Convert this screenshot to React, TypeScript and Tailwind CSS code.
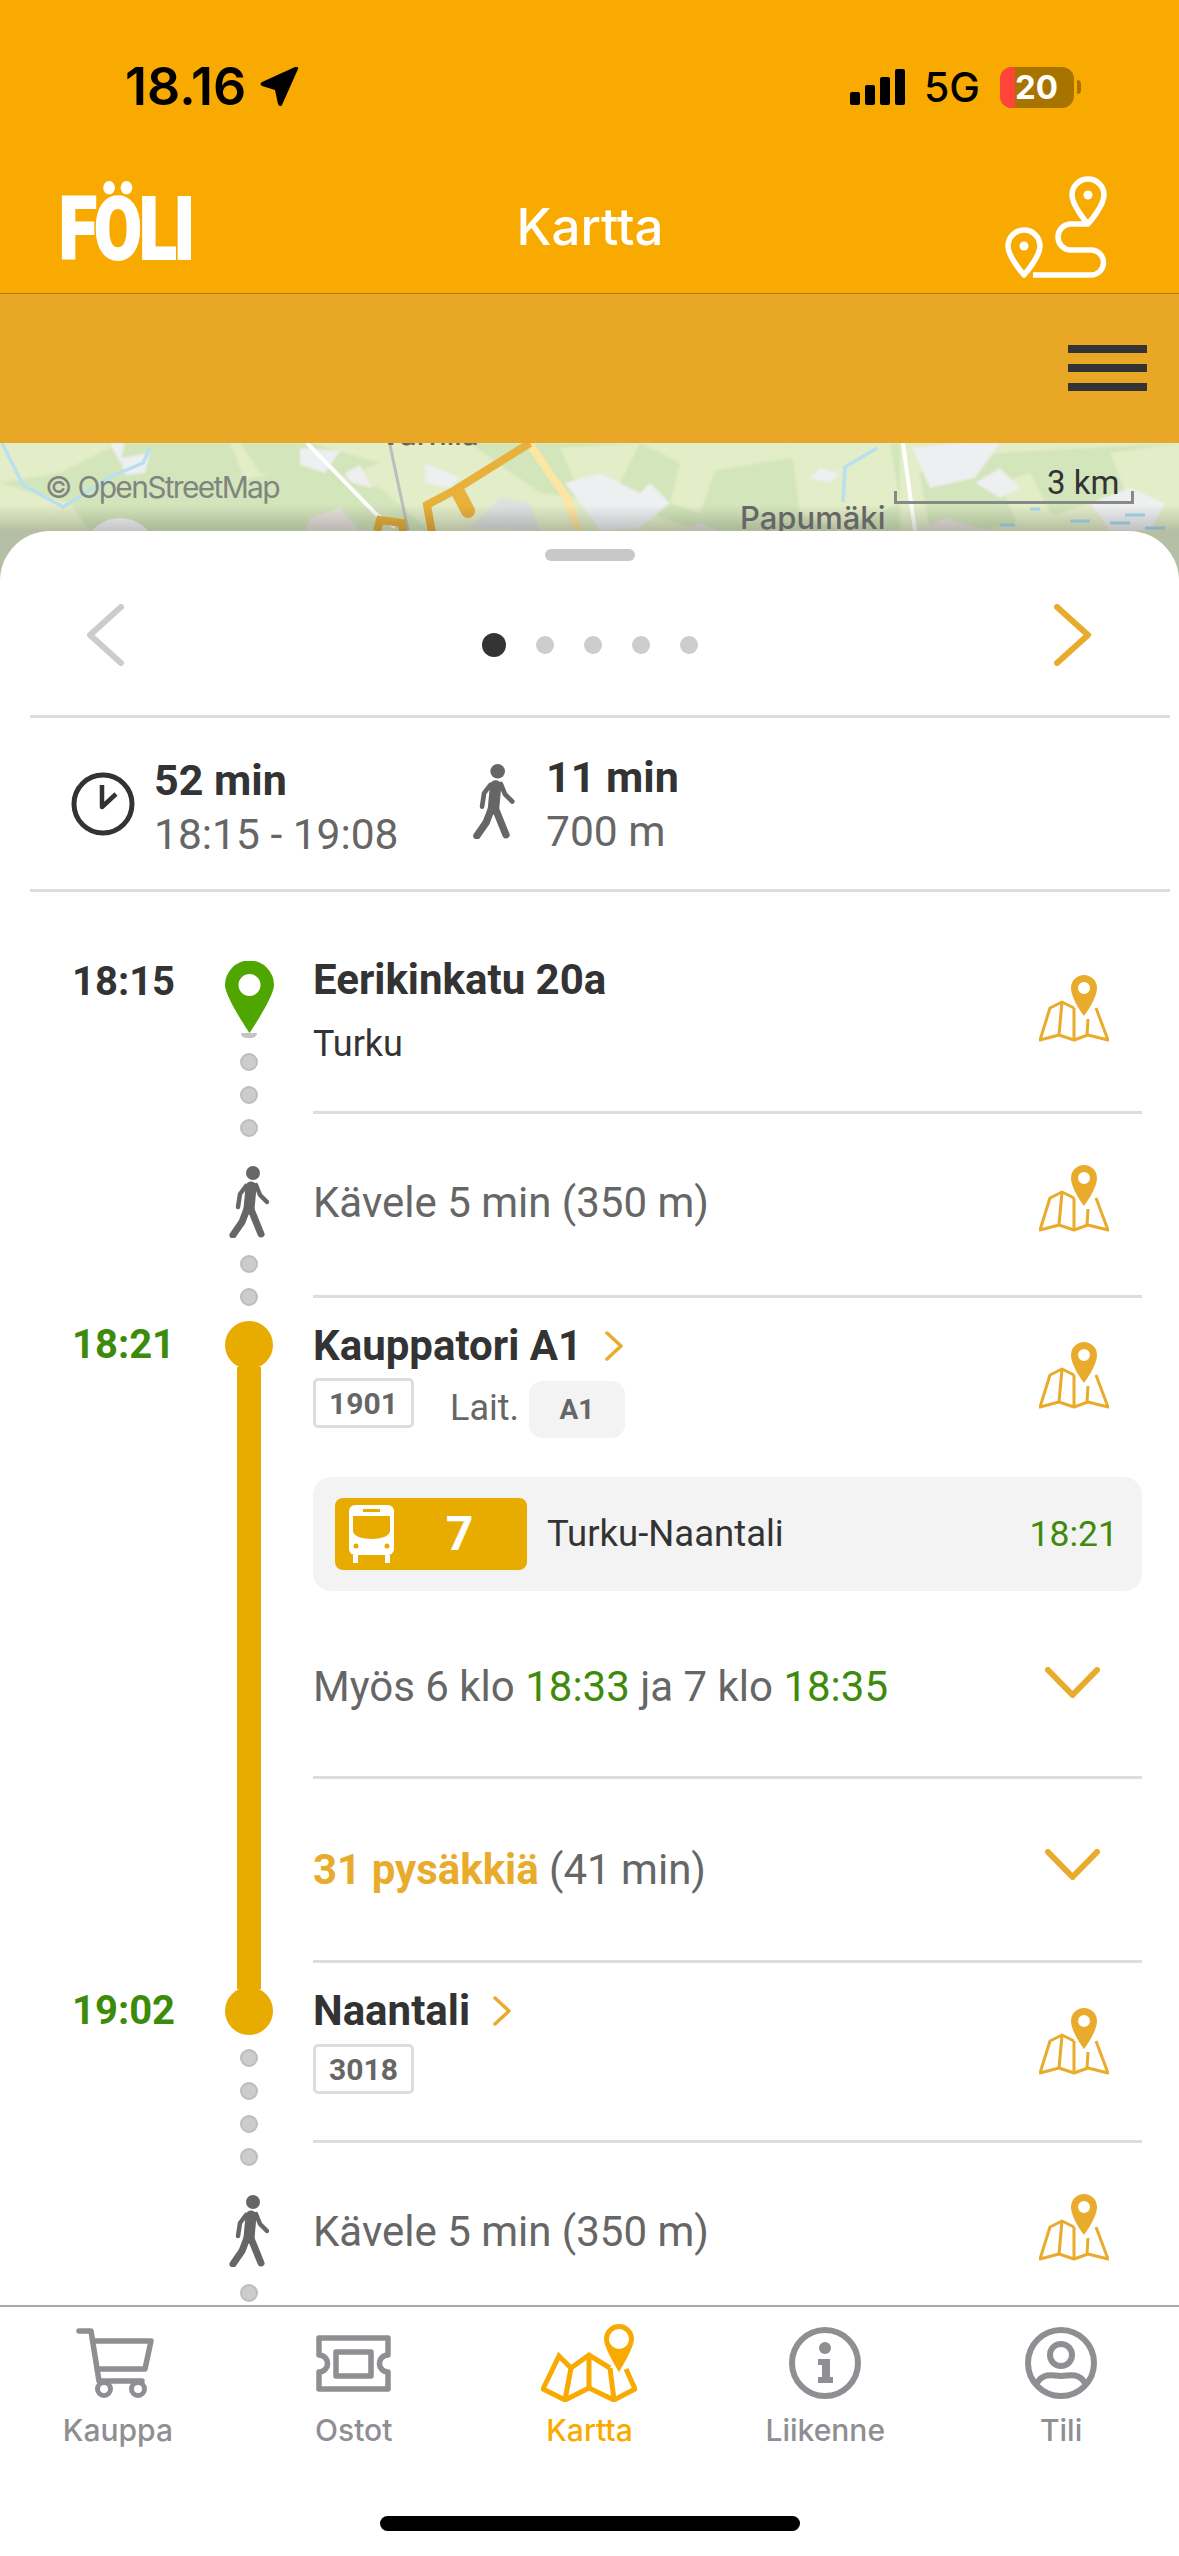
import React from 'react';

const AMBER = '#e9ab2b';

function MapPinIcon() {
  return (
    <svg width="70" height="67" viewBox="0 0 70 67" fill="none" className="shrink-0">
      <path d="M35 33L23 27L11 33L1 65L20 60L35 65L49 60L69 65L57 33" stroke={AMBER} strokeWidth="3" strokeLinejoin="round" />
      <path d="M23 27L20 60M35 33V65M49 44L48 60" stroke={AMBER} strokeWidth="3" />
      <path fillRule="evenodd" clipRule="evenodd" d="M45 41C45 41 32 24 32 13a13 13 0 0 1 26 0C58 24 45 41 45 41ZM45 7a6 6 0 1 0 0 12a6 6 0 0 0 0-12Z" fill={AMBER} />
    </svg>
  );
}

function Walker({ className }: { className?: string }) {
  return (
    <svg width="40" height="73" viewBox="0 0 40 73" fill="none" className={className}>
      <circle cx="24" cy="8" r="7" fill="#666" />
      <path d="M22 22L20 44" stroke="#666" strokeWidth="11" strokeLinecap="round" />
      <path d="M21 42L32 69" stroke="#666" strokeWidth="7" strokeLinecap="round" />
      <path d="M18 44L13 57L4 70" stroke="#666" strokeWidth="7" strokeLinecap="round" strokeLinejoin="round" />
      <path d="M17 21L11 29L9 42" stroke="#666" strokeWidth="4.5" strokeLinecap="round" strokeLinejoin="round" />
      <path d="M27 20L31 30L38 37" stroke="#666" strokeWidth="4.5" strokeLinecap="round" strokeLinejoin="round" />
    </svg>
  );
}

function Dot() {
  return <div className="w-[18px] h-[18px] rounded-full bg-[#cccccc] border-2 border-[#bdbdbd] shrink-0" />;
}

function ChevronDown() {
  return (
    <svg width="55" height="32" viewBox="0 0 55 32" fill="none" className="shrink-0">
      <path d="M3 3L27.5 28L52 3" stroke={AMBER} strokeWidth="6" strokeLinecap="round" strokeLinejoin="round" />
    </svg>
  );
}

function ChevronSmall() {
  return (
    <svg width="20" height="30" viewBox="0 0 20 30" fill="none" className="shrink-0">
      <path d="M3 2L17 15L3 28" stroke={AMBER} strokeWidth="3.5" strokeLinecap="round" strokeLinejoin="round" />
    </svg>
  );
}

function StatusBar() {
  return (
    <div className="h-[174px] flex items-center justify-between pl-[125px] pr-[98px] font-['Inter',sans-serif] text-black">
      <div className="flex items-center gap-[14px]">
        <span className="text-[52px] leading-none font-semibold">18.16</span>
        <svg width="40" height="40" viewBox="0 0 40 40">
          <path d="M38 2L22 38C21 40 19 39 18 37L15 23L2 19C0 18 0 16 2 15L35 0C37 0 39 0 38 2Z" fill="#000" />
        </svg>
      </div>
      <div className="flex items-center">
        <div className="flex items-end gap-[5px] h-[36px]">
          <div className="w-[10px] h-[13px] rounded-[2px] bg-black" />
          <div className="w-[10px] h-[20px] rounded-[2px] bg-black" />
          <div className="w-[10px] h-[28px] rounded-[2px] bg-black" />
          <div className="w-[10px] h-[36px] rounded-[2px] bg-black" />
        </div>
        <span className="ml-[19px] text-[41px] leading-none font-medium">5G</span>
        <div className="ml-[20px] w-[74px] h-[41px] rounded-[12px] bg-[#a87400] overflow-hidden flex relative">
          <div className="w-[15px] bg-[#ff453a]" />
          <span className="text-white text-[33px] leading-[41px] font-bold">20</span>
        </div>
        <div className="ml-[3px] w-[4px] h-[14px] rounded-r-full bg-[#a87400]" />
      </div>
    </div>
  );
}

function RouteIcon() {
  return (
    <svg width="102" height="102" viewBox="0 0 102 102" fill="none">
      <path d="M83 48C83 48 67 30 67 19a16 16 0 0 1 32 0C99 30 83 48 83 48Z" stroke="#fff" strokeWidth="5.5" strokeLinejoin="round" />
      <circle cx="83" cy="19" r="4.5" fill="#fff" />
      <path d="M19 99C19 99 3 81 3 70a16 16 0 0 1 32 0C35 81 19 99 19 99Z" stroke="#fff" strokeWidth="5.5" strokeLinejoin="round" />
      <circle cx="19" cy="70" r="4.5" fill="#fff" />
      <path d="M28 99H86a12.5 12.5 0 0 0 0-25H66a13 13 0 0 1 0-26H82" stroke="#fff" strokeWidth="5.5" />
    </svg>
  );
}

function MapBackground() {
  const dark = [
    '0,40 60,30 120,0 230,0 250,50 220,88 90,88 70,60',
    '150,88 230,40 300,25 380,45 430,88',
    '470,0 640,0 700,30 760,20 900,0 900,88 700,88 620,60 540,50',
    '920,30 1000,10 1179,0 1179,30 1060,70 980,88 930,88',
    '240,0 310,0 380,20 330,40 260,30',
  ];
  const light = [
    '420,30 470,40 500,88 430,88',
    '560,5 640,0 620,40 580,50',
    '680,20 720,15 700,70 670,60',
    '790,0 890,0 900,60 840,88 800,70',
    '1000,40 1030,30 1060,88 1020,88',
    '1110,10 1179,0 1179,50 1130,60',
    '60,70 20,88 0,88 0,70',
  ];
  const white = [
    '565,40 600,30 640,50 650,40 670,60 640,85 600,88 580,60',
    '912,5 960,0 1000,0 975,35 930,45',
    '975,40 1000,25 1020,45 1000,55',
    '1090,60 1130,45 1165,60 1150,88 1110,88',
    '120,15 150,10 145,30 125,32',
    '300,5 340,8 325,30 300,22',
    '425,20 460,35 450,45 425,40',
    '345,30 360,22 372,45 352,40',
    '820,25 840,30 830,40 810,35',
    '110,0 125,0 120,20',
  ];
  return (
    <svg width="1179" height="137" viewBox="0 0 1179 137" className="block">
      <defs>
        <linearGradient id="sheetShade" x1="0" y1="0" x2="0" y2="1">
          <stop offset="0" stopColor="#000" stopOpacity="0" />
          <stop offset="1" stopColor="#000" stopOpacity="0.2" />
        </linearGradient>
      </defs>
      <rect width="1179" height="137" fill="#e3edc8" />
      <g className="blur-[1px]">
        {dark.map((p) => <polygon key={p} points={p} fill="#d3e5bb" />)}
        {light.map((p) => <polygon key={p} points={p} fill="#e3edc8" />)}
        {white.map((p) => <polygon key={p} points={p} fill="#edeff1" />)}
        <polygon points="470,85 500,55 530,60 540,88" fill="#dfe0e0" />
        <polygon points="680,88 700,80 720,88" fill="#e9e2dd" />
        <polygon points="915,88 945,75 990,88" fill="#e9e2dd" />
        <polygon points="310,75 340,65 360,88 305,88" fill="#e9e2dd" />
      </g>
      <polyline points="2,0 23,42 63,64 110,34 143,20 150,5" fill="none" stroke="#b8e0f0" strokeWidth="3.5" />
      <polyline points="877,5 845,24 843,59" fill="none" stroke="#b8e0f0" strokeWidth="3.5" />
      <path d="M1000 82H1015M1070 78H1090M1110 80H1130M1125 72H1145M1145 85H1165M1030 66H1040" stroke="#a8d8ee" strokeWidth="3" />
      <polyline points="307,0 377,72 395,84" fill="none" stroke="#fff" strokeWidth="4" />
      <polyline points="903,0 915,88" fill="none" stroke="#fff" strokeWidth="4" />
      <polyline points="390,2 408,87" fill="none" stroke="#bdbdbd" strokeWidth="3" />
      <polyline points="530,2 567,55 578,88" fill="none" stroke="#fbe6a2" strokeWidth="8" />
      <polyline points="530,0 455,47 427,62 432,90" fill="none" stroke="#e8b13c" strokeWidth="8" />
      <polyline points="458,49 468,68" fill="none" stroke="#e8b13c" strokeWidth="14" strokeLinecap="round" />
      <polyline points="377,88 380,77 402,80 403,90" fill="none" stroke="#e8b13c" strokeWidth="8" />
      <circle cx="120" cy="113" r="38" fill="#f4f4f4" />
      <rect y="62" width="1179" height="26" fill="url(#sheetShade)" />
      <rect y="88" width="1179" height="49" fill="#b4bfa6" />
    </svg>
  );
}

function Header() {
  return (
    <>
      <div className="bg-[#f9aa00] border-b border-[#a9801a]">
        <StatusBar />
        <div className="h-[119px] grid grid-cols-3 items-center pl-[59px] pr-[72px] pb-[16px]">
          <div className="h-[90px] flex items-end">
            <span className="block font-['Roboto',sans-serif] font-black text-[88px] leading-[85px] text-white tracking-[-3px] [-webkit-text-stroke:2px_white] origin-left scale-x-[0.78] whitespace-nowrap">FÖLI</span>
          </div>
          <div className="text-center font-['Inter',sans-serif] font-medium text-[51px] leading-none text-white ml-[14px]">Kartta</div>
          <div className="flex justify-end pt-[2px]"><RouteIcon /></div>
        </div>
      </div>
      <div className="h-[149px] bg-[#e8a825] flex flex-col items-end gap-[11px] pt-[51px] pr-[32px]">
        <div className="w-[79px] h-[8px] bg-[#333]" />
        <div className="w-[79px] h-[8px] bg-[#333]" />
        <div className="w-[79px] h-[8px] bg-[#333]" />
      </div>
      <div className="h-[137px] relative overflow-hidden shrink-0">
        <MapBackground />
        <span className="absolute left-[45px] top-[24px] font-['Inter',sans-serif] text-[30px] leading-[40px] tracking-[-1.7px] text-[#808580]">© OpenStreetMap</span>
        <span className="absolute left-[1047px] top-[20px] font-['Roboto',sans-serif] text-[33px] leading-[40px] text-[#333]">3 km</span>
        <div className="absolute left-[894px] top-[48px] w-[240px] h-[13px] border-x-[3px] border-b-[3px] border-[#888]" />
        <span className="absolute left-[740px] top-[55px] font-['Inter',sans-serif] font-medium text-[31px] leading-[40px] text-[#666]">Papumäki</span>
        <span className="absolute left-[380px] -top-[29px] font-['Inter',sans-serif] font-medium text-[30px] leading-[40px] text-[#666]">Varnila</span>
      </div>
    </>
  );
}

function Pager() {
  return (
    <div className="h-[154px] flex justify-between items-start pl-[86px] pr-[87px]">
      <svg width="38" height="62" viewBox="0 0 38 62" fill="none" className="mt-[43px]">
        <path d="M35 3L4 31L35 59" stroke="#cccccc" strokeWidth="6" strokeLinecap="round" strokeLinejoin="round" />
      </svg>
      <div className="mt-[72px] ml-[2px] flex items-center gap-[30px]">
        <div className="w-[24px] h-[24px] rounded-full bg-[#333]" />
        {[1, 2, 3, 4].map((i) => <div key={i} className="w-[18px] h-[18px] rounded-full bg-[#cccccc]" />)}
      </div>
      <svg width="38" height="62" viewBox="0 0 38 62" fill="none" className="mt-[43px]">
        <path d="M3 3L34 31L3 59" stroke={AMBER} strokeWidth="6" strokeLinecap="round" strokeLinejoin="round" />
      </svg>
    </div>
  );
}

function Summary() {
  return (
    <div className="h-[177px] ml-[30px] mr-[9px] border-y-[3px] border-[#dddddd] flex pl-[41px]">
      <svg width="64" height="64" viewBox="0 0 64 64" fill="none" className="mt-[54px] shrink-0">
        <circle cx="32" cy="32" r="29" stroke="#333" strokeWidth="5" />
        <path d="M31 13V35L45 22" stroke="#333" strokeWidth="4.5" strokeLinejoin="round" />
      </svg>
      <div className="ml-[19px] w-[318px] pt-[37px]">
        <div className="text-[43px] leading-[50px] font-bold text-[#333]">52 min</div>
        <div className="mt-[5px] text-[42.5px] leading-[50px] text-[#666]">18:15 - 19:08</div>
      </div>
      <Walker className="mt-[45px] shrink-0 w-[43px] h-[76px]" />
      <div className="ml-[31px] pt-[34px]">
        <div className="text-[43px] leading-[50px] font-bold text-[#333]">11 min</div>
        <div className="mt-[5px] text-[42.5px] leading-[50px] text-[#666]">700 m</div>
      </div>
    </div>
  );
}

function TimeColumn() {
  const cls = "h-[50px] text-[40px] leading-[50px] font-bold";
  return (
    <div className="w-[150px] shrink-0 pt-[65px]">
      <div className={`${cls} text-[#333]`}>18:15</div>
      <div className={`${cls} mt-[313px] text-[#3e8a0a]`}>18:21</div>
      <div className={`${cls} mt-[616px] text-[#3e8a0a]`}>19:02</div>
    </div>
  );
}

function Rail() {
  return (
    <div className="w-[54px] shrink-0 flex flex-col items-center pt-[69px]">
      <svg width="49" height="72" viewBox="0 0 49 72" className="shrink-0">
        <path fillRule="evenodd" clipRule="evenodd" d="M24.5 72C24.5 72 0 36 0 24a24.5 24.5 0 0 1 49 0C49 36 24.5 72 24.5 72ZM24.5 13a11 11 0 1 0 0 22a11 11 0 0 0 0-22Z" fill="#4fa600" />
      </svg>
      <div className="w-[16px] h-[5px] rounded-b-full bg-[#c4c4c4]" />
      <div className="mt-[15px] flex flex-col gap-[15px]">
        <Dot /><Dot /><Dot />
      </div>
      <Walker className="mt-[28px] shrink-0" />
      <div className="mt-[17px] flex flex-col gap-[15px]">
        <Dot /><Dot />
      </div>
      <div className="mt-[15px] w-[48px] h-[48px] rounded-full bg-[#e8ab00] shrink-0" />
      <div className="-mt-[2px] w-[24px] h-[622px] bg-[#e8ab00] shrink-0" />
      <div className="-mt-[2px] w-[48px] h-[48px] rounded-full bg-[#e8ab00] shrink-0" />
      <div className="mt-[14px] flex flex-col gap-[15px]">
        <Dot /><Dot /><Dot /><Dot />
      </div>
      <Walker className="mt-[28px] shrink-0" />
      <div className="mt-[17px]"><Dot /></div>
    </div>
  );
}

function StopCode({ code }: { code: string }) {
  return (
    <div className="w-[101px] h-[50px] rounded-[5px] border-[3px] border-[#dddddd] flex items-center justify-center text-[30px] font-bold text-[#666]">{code}</div>
  );
}

function Content() {
  const title = "h-[50px] text-[42px] leading-[50px] font-bold text-[#333]";
  const gray = "h-[50px] text-[42px] leading-[50px] text-[#666]";
  return (
    <div className="ml-[37px] w-[829px] shrink-0">
      <div className="h-[222px] border-b-[3px] border-[#dddddd] flex justify-between pr-[33px]">
        <div className="pt-[63px]">
          <div className={title}>Eerikinkatu 20a</div>
          <div className="mt-[19px] h-[40px] text-[36px] leading-[40px] text-[#333]">Turku</div>
        </div>
        <div className="pt-[83px]"><MapPinIcon /></div>
      </div>

      <div className="h-[184px] border-b-[3px] border-[#dddddd] flex justify-between pr-[33px]">
        <div className={`${gray} mt-[64px]`}>Kävele 5 min (350 m)</div>
        <div className="pt-[51px]"><MapPinIcon /></div>
      </div>

      <div className="flex justify-between pr-[33px]">
        <div className="pt-[23px]">
          <div className="flex items-center gap-[22px]">
            <div className={title}>Kauppatori A1</div>
            <ChevronSmall />
          </div>
          <div className="flex items-start">
            <div className="mt-[7px]"><StopCode code="1901" /></div>
            <div className="ml-[36px] mt-[12px] text-[36px] leading-[50px] text-[#666]">Lait.</div>
            <div className="ml-[10px] mt-[10px] w-[96px] h-[57px] rounded-[14px] bg-[#f3f3f3] flex items-center justify-center text-[28px] font-bold text-[#666]">A1</div>
          </div>
        </div>
        <div className="pt-[44px]"><MapPinIcon /></div>
      </div>

      <div className="mt-[39px] h-[114px] rounded-[18px] bg-[#f3f3f3] flex items-center pl-[22px] pr-[24px]">
        <div className="w-[192px] h-[72px] rounded-[8px] bg-[#e8ab00] flex items-center pl-[14px]">
          <svg width="45" height="58" viewBox="0 0 45 58" className="shrink-0">
            <rect width="45" height="50" rx="6" fill="#fff" />
            <path d="M4 11H41V26C41 31 32 34 22.5 34C13 34 4 31 4 26Z" fill="#e8ab00" />
            <rect x="14" y="4" width="17" height="3" fill="#e8ab00" />
            <circle cx="7" cy="41" r="2.5" fill="#e8ab00" />
            <circle cx="38" cy="41" r="2.5" fill="#e8ab00" />
            <rect x="4" y="50" width="5" height="8" fill="#fff" />
            <rect x="36" y="50" width="5" height="8" fill="#fff" />
          </svg>
          <div className="flex-1 pr-[2px] text-center text-[48px] leading-none font-bold text-white">7</div>
        </div>
        <div className="ml-[20px] flex-1 text-[36.5px] leading-[40px] text-[#333]">Turku-Naantali</div>
        <div className="text-[35.5px] leading-[40px] text-[#3e8a0a]">18:21</div>
      </div>

      <div className="h-[188px] border-b-[3px] border-[#dddddd] flex justify-between pr-[42px]">
        <div className={`${gray} mt-[71px]`}>
          Myös 6 klo <span className="text-[#3e8a0a]">18:33</span> ja 7 klo <span className="text-[#3e8a0a]">18:35</span>
        </div>
        <div className="pt-[76px]"><ChevronDown /></div>
      </div>

      <div className="h-[184px] border-b-[3px] border-[#dddddd] flex justify-between pr-[42px]">
        <div className="mt-[66px] h-[50px] text-[42px] leading-[50px] text-[#666]">
          <span className="font-bold text-[#e9ab2b]">31 pysäkkiä</span> (41 min)
        </div>
        <div className="pt-[70px]"><ChevronDown /></div>
      </div>

      <div className="h-[180px] border-b-[3px] border-[#dddddd] flex justify-between pr-[33px]">
        <div className="pt-[23px]">
          <div className="flex items-center gap-[22px]">
            <div className={title}>Naantali</div>
            <ChevronSmall />
          </div>
          <div className="mt-[8px]"><StopCode code="3018" /></div>
        </div>
        <div className="pt-[45px]"><MapPinIcon /></div>
      </div>

      <div className="flex justify-between pr-[33px]">
        <div className={`${gray} mt-[64px]`}>Kävele 5 min (350 m)</div>
        <div className="pt-[51px]"><MapPinIcon /></div>
      </div>
    </div>
  );
}

function TabBar() {
  const gray = '#8e8e93';
  const tabs = [
    {
      label: 'Kauppa',
      icon: (
        <svg width="78" height="70" viewBox="0 0 78 70" fill="none" className="-ml-[5px]">
          <path d="M3 3H15L23 53H66" stroke={gray} strokeWidth="5.5" strokeLinecap="round" strokeLinejoin="round" />
          <path d="M17 13H75L69 41H22" stroke={gray} strokeWidth="5.5" strokeLinejoin="round" />
          <circle cx="28" cy="61" r="6.5" stroke={gray} strokeWidth="5" />
          <circle cx="62" cy="61" r="6.5" stroke={gray} strokeWidth="5" />
        </svg>
      ),
    },
    {
      label: 'Ostot',
      icon: (
        <svg width="75" height="57" viewBox="0 0 75 57" fill="none">
          <path d="M3 3H72V20a8.5 8.5 0 0 0 0 17V54H3V37a8.5 8.5 0 0 0 0-17Z" stroke={gray} strokeWidth="5.5" strokeLinejoin="round" />
          <rect x="20" y="17" width="35" height="24" stroke={gray} strokeWidth="5.5" strokeLinejoin="round" />
        </svg>
      ),
    },
    {
      label: 'Kartta',
      active: true,
      icon: (
        <svg width="96" height="78" viewBox="0 0 96 78" fill="none">
          <path d="M69 44L48 31L30 44L18 32L2 65L24 76L48 64L73 76L94 65L85 45" stroke="#f9aa00" strokeWidth="5" />
          <path d="M30 44L24 76M48 31V64M69 44L73 76" stroke="#f9aa00" strokeWidth="5" />
          <path fillRule="evenodd" clipRule="evenodd" d="M78 48C78 48 63 24 63 15a15 15 0 0 1 30 0C93 24 78 48 78 48ZM78 5a10 10 0 1 0 0 20a10 10 0 0 0 0-20Z" fill="#f9aa00" />
        </svg>
      ),
    },
    {
      label: 'Liikenne',
      icon: (
        <svg width="72" height="72" viewBox="0 0 72 72" fill="none">
          <circle cx="36" cy="36" r="33" stroke={gray} strokeWidth="6" />
          <circle cx="36" cy="21" r="6" fill={gray} />
          <path d="M29 32H41V50H44V56H29V50H33V38H29Z" fill={gray} />
        </svg>
      ),
    },
    {
      label: 'Tili',
      icon: (
        <svg width="72" height="72" viewBox="0 0 72 72" fill="none">
          <circle cx="36" cy="36" r="33" stroke={gray} strokeWidth="6" />
          <circle cx="36" cy="28" r="11" stroke={gray} strokeWidth="6" />
          <path d="M12 56C18 46 27 48 36 49C45 48 54 46 60 56" stroke={gray} strokeWidth="6" />
        </svg>
      ),
    },
  ];
  return (
    <div className="border-t-2 border-[#aaaaaa] bg-white shrink-0 h-[251px] relative z-10">
      <div className="grid grid-cols-5 pt-[16px]">
        {tabs.map((t) => (
          <div key={t.label} className="flex flex-col items-center">
            <div className="h-[80px] flex items-center">{t.icon}</div>
            <div className={`mt-[9px] h-[36px] font-['Inter',sans-serif] font-medium text-[30px] leading-[36px] ${t.active ? 'text-[#f9aa00]' : 'text-[#8e8e93]'}`}>{t.label}</div>
          </div>
        ))}
      </div>
      <div className="mt-[68px] mx-auto w-[420px] h-[15px] rounded-full bg-black" />
    </div>
  );
}

export default function App() {
  return (
    <div className="w-[1179px] h-[2556px] overflow-hidden flex flex-col bg-white font-['Roboto',sans-serif]">
      <Header />
      <div className="relative -mt-[49px] flex-1 min-h-0 overflow-hidden bg-white rounded-t-[50px] flex flex-col">
        <div className="shrink-0 pt-[18px] flex justify-center">
          <div className="w-[90px] h-[12px] rounded-full bg-[#c8c8c8]" />
        </div>
        <Pager />
        <Summary />
        <div className="flex-1 min-h-0 flex pl-[72px] overflow-hidden">
          <TimeColumn />
          <Rail />
          <Content />
        </div>
      </div>
      <TabBar />
    </div>
  );
}
